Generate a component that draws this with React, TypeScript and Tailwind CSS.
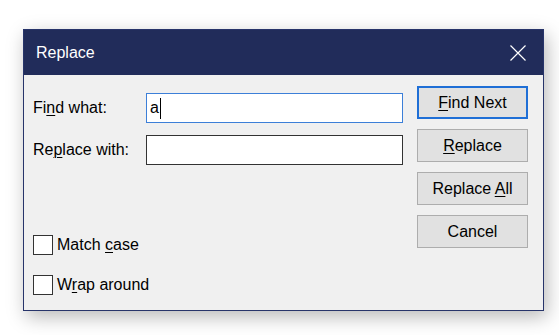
import React from 'react';

const font = { fontFamily: '"Liberation Sans", Arial, sans-serif' };

function Key({ children }: { children: React.ReactNode }) {
  return <span className="underline underline-offset-[2px] decoration-1">{children}</span>;
}

function Button({ children, primary }: { children: React.ReactNode; primary?: boolean }) {
  return (
    <button
      className={`h-[33px] w-[111px] bg-[#e1e1e1] text-[16px] text-black ${primary ? 'border-2 border-[#1f6fd6]' : 'border border-[#adadad]'}`}
    >
      {children}
    </button>
  );
}

function Checkbox({ children }: { children: React.ReactNode }) {
  return (
    <div className="flex h-[20px] items-center gap-[4px]">
      <div className="h-[20px] w-[20px] border border-[#333333] bg-white" />
      <span className="text-[16px] leading-[20px] text-black">{children}</span>
    </div>
  );
}

export default function App() {
  return (
    <div className="min-h-screen bg-white pl-[23px] pt-[29px]" style={font}>
      <div className="flex h-[282px] w-[521px] flex-col border border-[#27346a] bg-[#f0f0f0] shadow-[3px_6px_18px_rgba(0,0,0,0.28)]">
        {/* Title bar */}
        <div className="flex h-[45px] items-center justify-between bg-[#212c5a] pl-[12px] pr-[17px]">
          <span className="text-[16px] text-white">Replace</span>
          <svg width="16" height="16" viewBox="0 0 16 16">
            <path d="M0.5 0.5 L15.5 15.5 M15.5 0.5 L0.5 15.5" stroke="#ffffff" strokeWidth="1.2" />
          </svg>
        </div>

        {/* Body */}
        <div className="flex flex-1 pr-[15px]">
          <div className="flex w-[379px] flex-col pl-[9px] pt-[18px] pb-[15px]">
            <div className="flex flex-col gap-[12px]">
              <div className="flex items-center">
                <label className="w-[113px] text-[16px] text-black">
                  Fi<Key>n</Key>d what:
                </label>
                <div className="flex h-[30px] w-[257px] items-center border border-[#3c7fd8] bg-white pl-[3px] text-[16px] text-black">
                  <span>a</span>
                  <span className="ml-[1px] h-[21px] w-[1px] bg-black" />
                </div>
              </div>
              <div className="flex items-center">
                <label className="w-[113px] text-[16px] text-black">
                  Re<Key>p</Key>lace with:
                </label>
                <div className="h-[30px] w-[257px] border border-[#333333] bg-white" />
              </div>
            </div>
            <div className="flex-1" />
            <div className="flex flex-col gap-[20px]">
              <Checkbox>
                Match <Key>c</Key>ase
              </Checkbox>
              <Checkbox>
                W<Key>r</Key>ap around
              </Checkbox>
            </div>
          </div>

          <div className="ml-[14px] flex flex-col gap-[10px] pt-[11px]">
            <Button primary>
              <Key>F</Key>ind Next
            </Button>
            <Button>
              <Key>R</Key>eplace
            </Button>
            <Button>
              Replace <Key>A</Key>ll
            </Button>
            <Button>Cancel</Button>
          </div>
        </div>
      </div>
    </div>
  );
}
